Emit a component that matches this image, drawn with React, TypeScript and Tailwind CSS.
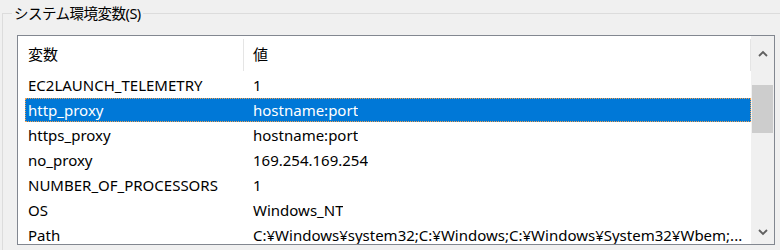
import React from "react";

const rows = [
  { name: "EC2LAUNCH_TELEMETRY", value: "1" },
  { name: "http_proxy", value: "hostname:port", selected: true },
  { name: "https_proxy", value: "hostname:port" },
  { name: "no_proxy", value: "169.254.169.254" },
  { name: "NUMBER_OF_PROCESSORS", value: "1" },
  { name: "OS", value: "Windows_NT" },
  { name: "Path", value: "C:¥Windows¥system32;C:¥Windows;C:¥Windows¥System32¥Wbem;..." },
];

function Chevron({ up }: { up?: boolean }) {
  return (
    <svg width="10" height="7" viewBox="0 0 10 7" className="block">
      <path
        d={up ? "M1 6 L5 2 L9 6" : "M1 1 L5 5 L9 1"}
        fill="none"
        stroke="#606060"
        strokeWidth="1.8"
      />
    </svg>
  );
}

function App() {
  return (
    <div
      className="w-[780px] h-[250px] overflow-hidden bg-[#f0f0f0] text-[15px] text-black"
      style={{ fontFamily: '"Noto Sans", "Noto Sans CJK JP", sans-serif' }}
    >
      <div className="relative mt-[13px] ml-[2px] h-[300px] border-l border-t border-[#dcdcdc] pl-[14px] pt-[21px]">
        <span className="absolute left-[9px] top-[-12px] bg-[#f0f0f0] px-[2px] text-[14.5px] leading-[22px] tracking-[-0.5px]">
          システム環境変数(S)
        </span>

        <div className="flex w-[758px] h-[210px] border border-[#828790] bg-white">
          <div className="flex-1 flex flex-col overflow-hidden">
            <div className="flex h-[37px] shrink-0 items-center">
              <div className="flex h-[32px] w-[226px] items-center pl-[10px] border-r border-[#e5e5e5]">
                変数
              </div>
              <div className="flex flex-1 h-[32px] items-center pl-[9px] border-r border-[#e5e5e5]">
                値
              </div>
            </div>
            {rows.map((r) => (
              <div key={r.name} className="h-[25px] shrink-0 pl-[7px]">
                <div
                  className={
                    r.selected
                      ? "flex h-[24px] items-center bg-[#0078d7] text-white border border-dotted border-[#f0a050]"
                      : "flex h-[24px] items-center border border-transparent"
                  }
                >
                  <div className="w-[225px] shrink-0 pl-[2px] whitespace-nowrap">{r.name}</div>
                  <div className="pl-[2px] whitespace-nowrap overflow-hidden">{r.value}</div>
                </div>
              </div>
            ))}
          </div>

          <div className="flex w-[23px] shrink-0 flex-col bg-[#f0f0f0]">
            <div className="flex h-[34px] items-center justify-center">
              <Chevron up />
            </div>
            <div className="flex-1 px-[1px] pt-[15px]">
              <div className="h-[48px] bg-[#cdcdcd]" />
            </div>
            <div className="flex h-[24px] items-center justify-center">
              <Chevron />
            </div>
          </div>
        </div>
      </div>
    </div>
  );
}

export default App;
